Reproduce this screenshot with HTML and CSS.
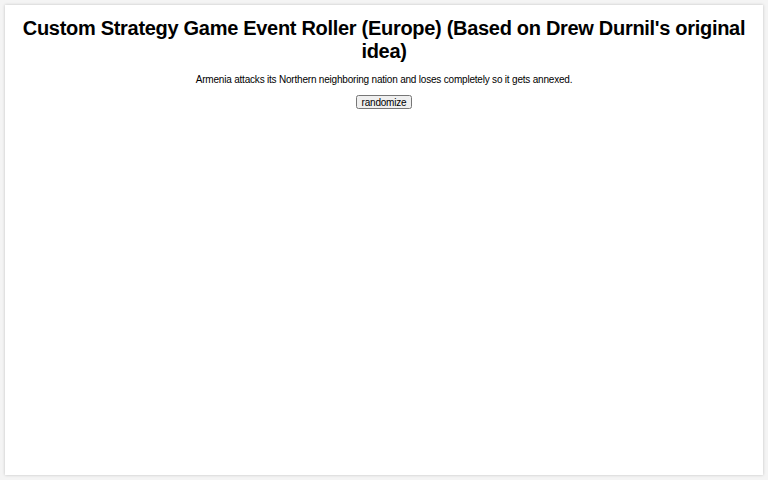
FILE: index.html
```html
<!DOCTYPE html>
<html lang="en">
<head>
    <meta charset="UTF-8">
    <meta name="viewport" content="width=device-width, initial-scale=1.0">
    <title>Custom Strategy Game Event Roller (Europe)</title>
    <link rel="stylesheet" href="styles.css">
</head>
<body>
    <div class="container">
        <h1>Custom Strategy Game Event Roller (Europe) (Based on Drew Durnil's original idea)</h1>
        <p id="event">Armenia attacks its Northern neighboring nation and loses completely so it gets annexed.</p>
        <button id="randomize-btn">randomize</button>
    </div>
</body>
</html>
```

FILE: styles.css
```css
html, body {
    height: 100%;
}
body {
    font-family: "Liberation Sans", Arial, sans-serif;
    background-color: #f4f4f4;
    margin: 0;
    padding: 5px;
    box-sizing: border-box;
}
.container {
    background-color: #fff;
    height: 100%;
    box-sizing: border-box;
    padding: 12px 15px;
    text-align: center;
    box-shadow: 0 0 3px rgba(0, 0, 0, 0.2);
}
h1 {
    font-size: 20px;
    line-height: 23px;
    letter-spacing: -0.3px;
    margin: 0 0 11px;
    color: #000;
}
p {
    font-size: 10px;
    line-height: 12px;
    letter-spacing: -0.2px;
    margin: 0 0 6px;
}
button {
    font-family: "Liberation Sans", Arial, sans-serif;
    font-size: 10px;
    letter-spacing: -0.2px;
    padding: 0 4px;
    height: 14px;
    line-height: 12px;
}
```
